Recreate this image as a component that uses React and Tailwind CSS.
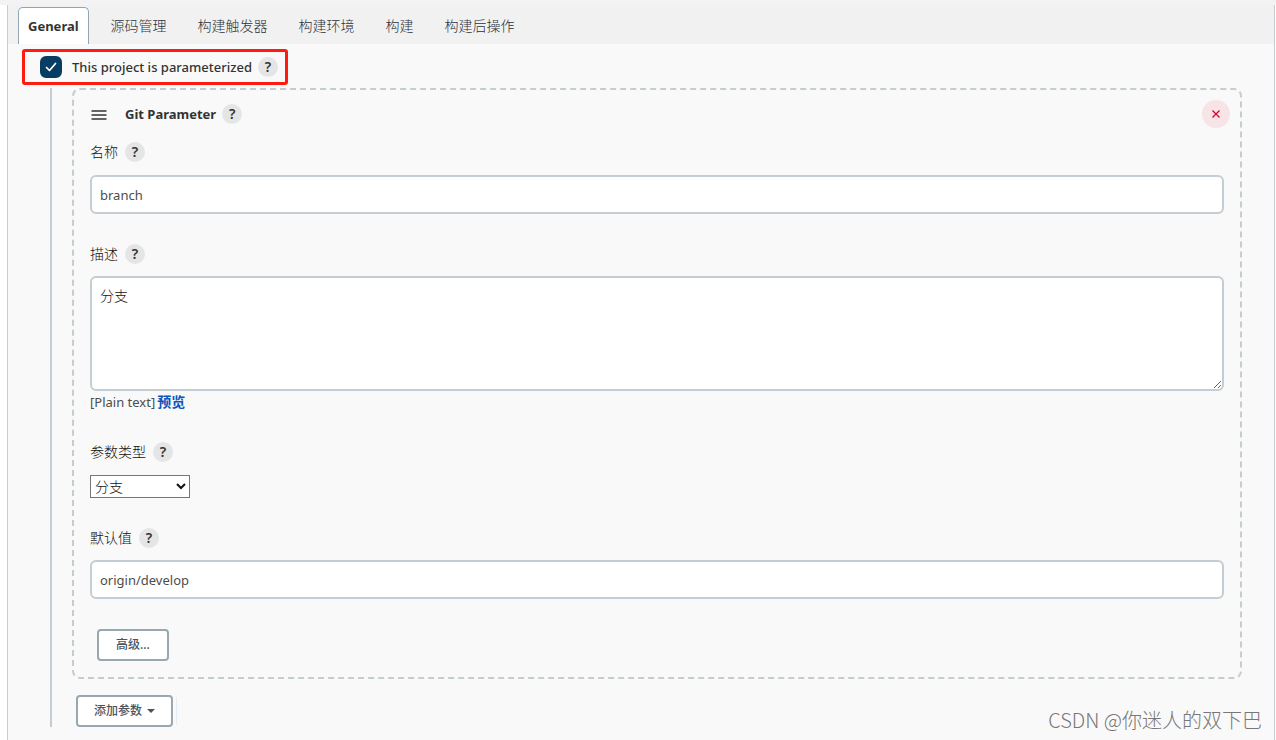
import { useState } from "react";

const TABS = ["General", "源码管理", "构建触发器", "构建环境", "构建", "构建后操作"];

function HelpButton({ topic }) {
  return (
    <button
      type="button"
      aria-label={`Help for ${topic}`}
      className="flex h-5 w-5 shrink-0 items-center justify-center rounded-full bg-[#e5e5e5] text-[14px] leading-5 font-semibold text-[#333333]"
    >
      ?
    </button>
  );
}

function FieldLabel({ htmlFor, children }) {
  return (
    <div className="flex h-5 items-center gap-[7px]">
      <label htmlFor={htmlFor} className="font-light text-[#111111]">
        {children}
      </label>
      <HelpButton topic={children} />
    </div>
  );
}

const inputClass =
  "block w-full rounded-md border-2 border-[#c3cdd2] bg-white px-2 outline-none";

export default function App() {
  const [active, setActive] = useState("General");
  return (
    <div className="flex min-h-screen flex-col bg-white font-['Noto_Sans','Noto_Sans_CJK_SC',sans-serif] text-[14px] leading-5 text-[#333333]">
      <div className="h-[5px] bg-[#f3f3f3]" />
      <main className="relative mr-px ml-[7px] flex-1 border-x border-[#c3cdd2] bg-[#f9f9f9]">
        <nav role="tablist" className="flex h-[39px] items-end gap-[9px] bg-[#f1f1f1] pl-[10px]">
          {TABS.map((tab) => (
            <button
              key={tab}
              type="button"
              role="tab"
              aria-selected={tab === active}
              onClick={() => setActive(tab)}
              className={
                tab === active
                  ? "mr-0.5 h-[37px] rounded-t-[5px] border border-b-0 border-[#93a5b0] bg-white px-[9px] text-[13px] font-bold text-[#333333]"
                  : "h-[37px] border border-b-0 border-transparent px-[10px] font-light text-[#2b323c]"
              }
            >
              {tab}
            </button>
          ))}
        </nav>

        <div className="mt-[5px] ml-[14px] flex h-9 w-[266px] items-center rounded-[3px] border-3 border-[#fe1b10] pl-[15px]">
          <span className="grid h-[22px] w-[22px]">
            <input
              id="parameterized"
              type="checkbox"
              defaultChecked
              className="peer col-start-1 row-start-1 h-[22px] w-[22px] appearance-none rounded-md border-2 border-[#073d62] bg-white checked:bg-[#073d62]"
            />
            <svg
              viewBox="0 0 22 22"
              className="pointer-events-none invisible col-start-1 row-start-1 peer-checked:visible"
              fill="none"
              stroke="#ffffff"
              strokeWidth="1.7"
              strokeLinecap="round"
              strokeLinejoin="round"
            >
              <path d="M6.5 11.5 9.5 14.5 15.5 7.5" />
            </svg>
          </span>
          <label htmlFor="parameterized" className="ml-[10px] text-[13px] font-medium whitespace-nowrap">
            This project is parameterized
          </label>
          <span className="ml-[6px]">
            <HelpButton topic="parameterized" />
          </span>
        </div>

        <div className="mt-[3px] mr-8 ml-[42px] border-l-2 border-[#c3cdd2] pl-5">
          <section className="rounded-lg border-2 border-dashed border-[#c3cdd2] px-4 pt-[10px] pb-4">
            <header className="flex h-7 items-center">
              <svg width="18" height="12" viewBox="0 0 18 12" className="mt-px" stroke="#333333" strokeWidth="1.5">
                <path d="M1.5 2h15M1.5 6h15M1.5 10h15" />
              </svg>
              <h2 className="ml-[17px] text-[13px] font-bold">Git Parameter</h2>
              <span className="ml-[6px]">
                <HelpButton topic="Git Parameter" />
              </span>
              <button
                type="button"
                aria-label="Remove parameter"
                className="-mr-[6px] ml-auto flex h-7 w-7 items-center justify-center rounded-full bg-[#f7e4e6]"
              >
                <svg width="10" height="10" viewBox="0 0 10 10" stroke="#d9002b" strokeWidth="1.3">
                  <path d="M1.5 1.5 8.5 8.5M8.5 1.5 1.5 8.5" />
                </svg>
              </button>
            </header>

            <div className="mt-[14px]">
              <FieldLabel htmlFor="name">名称</FieldLabel>
              <input
                id="name"
                type="text"
                defaultValue="branch"
                className={`${inputClass} mt-[13px] h-[39px] text-[13px] text-[#4d4d4d]`}
              />
            </div>

            <div className="mt-[30px]">
              <FieldLabel htmlFor="description">描述</FieldLabel>
              <textarea
                id="description"
                defaultValue="分支"
                className={`${inputClass} mt-3 h-[115px] resize-y py-2 font-light text-[#111111]`}
              />
              <p className="mt-px flex gap-[2px] text-[13px]">
                <span className="text-[#4d4d4d]">[Plain text]</span>
                <a href="#preview" className="text-[14px] font-bold text-[#0b55bb]">
                  预览
                </a>
              </p>
            </div>

            <div className="mt-[30px]">
              <FieldLabel htmlFor="type">参数类型</FieldLabel>
              <select
                id="type"
                className="mt-[13px] block h-[23px] w-[100px] rounded-none border border-[#767676] bg-white text-[14px] leading-5 font-light text-[#111111]"
              >
                <option>分支</option>
                <option>标签</option>
              </select>
            </div>

            <div className="mt-[30px]">
              <FieldLabel htmlFor="default">默认值</FieldLabel>
              <input
                id="default"
                type="text"
                defaultValue="origin/develop"
                className={`${inputClass} mt-3 h-[39px] text-[13px] text-[#4d4d4d]`}
              />
            </div>

            <button
              type="button"
              className="mt-[30px] ml-[7px] block h-8 w-[72px] rounded-[4px] border-2 border-[#98a7b0] bg-white text-[12px] font-medium text-[#4d545d]"
            >
              高级...
            </button>
          </section>

          <div className="mt-4 ml-1 flex items-center gap-[3px]">
            <button
              type="button"
              className="flex h-8 w-[97px] items-center justify-center gap-[5px] rounded-[4px] border-2 border-[#98a7b0] bg-white text-[12px] font-medium text-[#4d545d]"
            >
              添加参数
              <svg width="8" height="4" viewBox="0 0 8 4" fill="#4d545d">
                <path d="M0 0h8L4 4z" />
              </svg>
            </button>
            <span className="h-7 w-px bg-[#e6edf2]" />
          </div>
        </div>

        <p className="absolute right-3 bottom-[6px] font-['Noto_Sans_CJK_SC',sans-serif] text-[20px] leading-7 font-light text-[#777777]">
          CSDN @你迷人的双下巴
        </p>
      </main>
    </div>
  );
}
